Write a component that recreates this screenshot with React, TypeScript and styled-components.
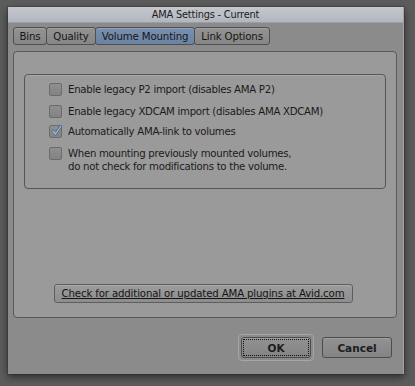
import React from "react";
import styled, { createGlobalStyle } from "styled-components";

const Global = createGlobalStyle`
  html, body { margin: 0; padding: 0; background: #5c5c5c; }
  body { width: 415px; height: 386px; overflow: hidden; font-family: "DejaVu Sans", "Liberation Sans", sans-serif; }
`;

const Page = styled.div`
  padding: 7px 0 0 8px;
`;

const Window = styled.div`
  width: 396px;
  height: 367px;
  background: #8b8b8b;
  box-shadow: 0 3px 8px rgba(0,0,0,0.55), 0 0 0 1px #4e4e4e;
  display: flex;
  flex-direction: column;
  box-sizing: border-box;
  border-right: 1px solid #a4a4a4;
`;

const TitleBar = styled.div`
  height: 15px;
  background: linear-gradient(#c4c7cd, #b2b6be);
  border-bottom: 1px solid #9a9ea5;
  display: flex;
  align-items: center;
  justify-content: center;
  font-size: 9.8px;
  color: #1c1c1c;
  letter-spacing: -0.2px;
`;

const Body = styled.div`
  flex: 1;
  display: flex;
  flex-direction: column;
  padding: 4px 6px 0 5px;
`;

const Tabs = styled.div`
  display: flex;
  height: 18px;
`;

const Tab = styled.div<{ $active?: boolean; $w: number }>`
  width: ${p => p.$w}px;
  box-sizing: border-box;
  height: 18px;
  border: 1px solid #4f4f4f;
  border-radius: 3px;
  margin-right: -1px;
  background: ${p => (p.$active ? "linear-gradient(#7990ad, #6a83a4)" : "linear-gradient(#939393, #868686)")};
  display: flex;
  align-items: center;
  justify-content: center;
  font-size: 10.2px;
  color: #161616;
  letter-spacing: -0.15px;
  white-space: nowrap;
  box-shadow: inset 0 1px 0 ${p => (p.$active ? "#8da2bd" : "#a0a0a0")};
`;

const Panel = styled.div`
  margin-top: 6px;
  width: 384px;
  height: 267px;
  box-sizing: border-box;
  border: 1px solid #595959;
  border-radius: 4px;
  background: #9a9a9a;
  display: flex;
  flex-direction: column;
  padding: 22px 11px 14px 10px;
`;

const Group = styled.div`
  width: 362px;
  height: 115px;
  box-sizing: border-box;
  border: 1px solid #555;
  border-radius: 4px;
  box-shadow: inset 0 1px 0 #a8a8a8;
  padding: 8px 0 0 24px;
  display: flex;
  flex-direction: column;
`;

const Row = styled.label<{ $h: number }>`
  display: flex;
  align-items: flex-start;
  height: ${p => p.$h}px;
  font-size: 10.2px;
  color: #1a1a1a;
  letter-spacing: -0.3px;
  line-height: 13px;
  white-space: nowrap;
`;

const Box = styled.span`
  flex: none;
  width: 13px;
  height: 13px;
  box-sizing: border-box;
  border: 1px solid #6b6b6b;
  border-radius: 2px;
  background: linear-gradient(#8f8f8f, #838383);
  margin-right: 6px;
  position: relative;
`;

const CheckMark = styled.svg`
  position: absolute;
  left: 0;
  top: -2px;
`;

const Spacer = styled.div`
  flex: 1;
`;

const LinkButton = styled.div`
  align-self: center;
  margin-left: -3px;
  width: 299px;
  height: 19px;
  box-sizing: border-box;
  border: 1px solid #5e5e5e;
  border-radius: 3px;
  background: linear-gradient(#9c9c9c, #8d8d8d);
  box-shadow: inset 0 1px 0 #aaa;
  display: flex;
  align-items: center;
  justify-content: center;
  font-size: 10.2px;
  color: #141414;
  text-decoration: underline;
  letter-spacing: -0.15px;
  white-space: nowrap;
`;

const Buttons = styled.div`
  display: flex;
  justify-content: flex-end;
  align-items: center;
  gap: 8px;
  padding: 16px 5px 0 0;
`;

const Focus = styled.div`
  padding: 2px;
  border: 1px solid #a6a6a6;
  border-radius: 4px;
`;

const Button = styled.div<{ $focus?: boolean; $w: number }>`
  width: ${p => p.$w}px;
  height: 21px;
  box-sizing: border-box;
  border: 1px solid #4c4c4c;
  border-radius: 3px;
  background: linear-gradient(#929292, #848484);
  box-shadow: inset 0 1px 0 #9f9f9f;
  display: flex;
  align-items: center;
  justify-content: center;
  font-size: 10.5px;
  font-weight: bold;
  color: #1c1c1c;
  position: relative;
  ${p => (p.$focus ? `&::after { content: ""; position: absolute; inset: 1px; border: 1px dotted #111; border-radius: 1px; }` : "")}
`;

const Check = () => (
  <CheckMark width="13" height="13" viewBox="0 0 13 13">
    <path d="M3 7 L5.5 10 L11 2" fill="none" stroke="#3f5b80" strokeWidth="2.6" strokeLinecap="round" strokeLinejoin="round" />
    <path d="M3 7 L5.5 10 L11 2" fill="none" stroke="#a9c4e6" strokeWidth="1.3" strokeLinecap="round" strokeLinejoin="round" />
  </CheckMark>
);

export default function App() {
  return (
    <Page>
      <Global />
      <Window>
        <TitleBar>AMA Settings - Current</TitleBar>
        <Body>
          <Tabs>
            <Tab $w={34}>Bins</Tab>
            <Tab $w={50}>Quality</Tab>
            <Tab $w={100} $active>Volume Mounting</Tab>
            <Tab $w={76}>Link Options</Tab>
          </Tabs>
          <Panel>
            <Group>
              <Row $h={22}><Box />Enable legacy P2 import (disables AMA P2)</Row>
              <Row $h={20}><Box />Enable legacy XDCAM import (disables AMA XDCAM)</Row>
              <Row $h={22}><Box><Check /></Box>Automatically AMA-link to volumes</Row>
              <Row $h={30}><Box /><span>When mounting previously mounted volumes,<br />do not check for modifications to the volume.</span></Row>
            </Group>
            <Spacer />
            <LinkButton>Check for additional or updated AMA plugins at Avid.com</LinkButton>
          </Panel>
          <Buttons>
            <Focus><Button $w={70} $focus>OK</Button></Focus>
            <Button $w={70}>Cancel</Button>
          </Buttons>
        </Body>
      </Window>
    </Page>
  );
}
